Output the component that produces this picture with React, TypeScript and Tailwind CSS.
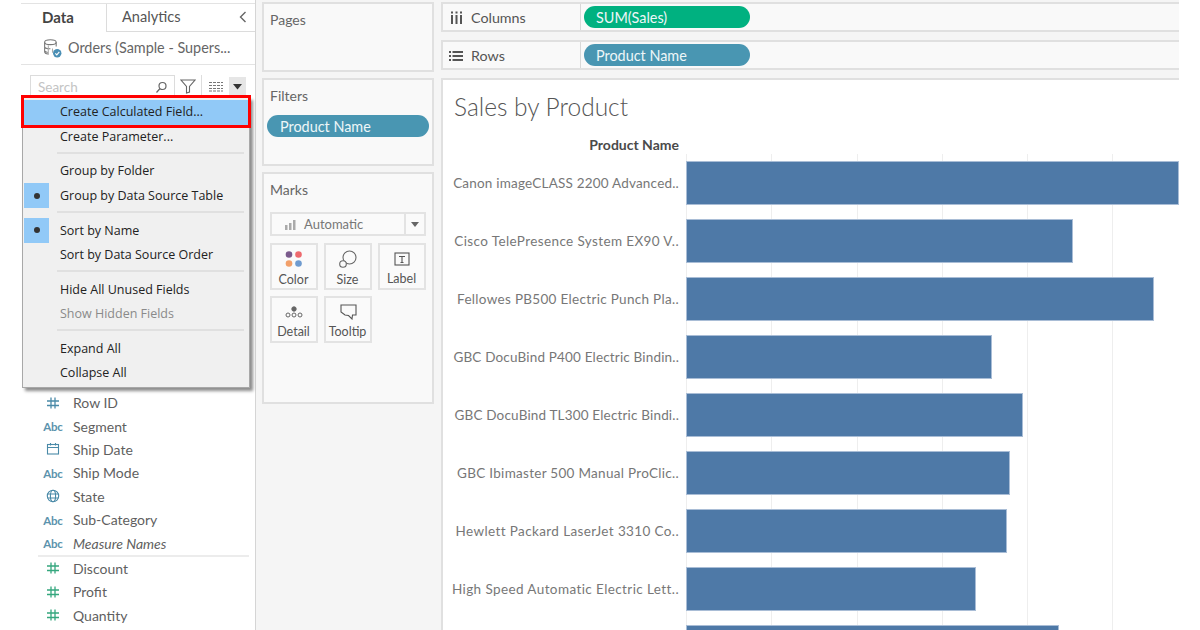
import React from "react";

const bars = [
  ["Canon imageCLASS 2200 Advanced..", 494, "tracking-[0.2px]"],
  ["Cisco TelePresence System EX90 V..", 387, "tracking-[0.38px]"],
  ["Fellowes PB500 Electric Punch Pla..", 468, "tracking-[0.31px]"],
  ["GBC DocuBind P400 Electric Bindin..", 306, "tracking-[0.17px]"],
  ["GBC DocuBind TL300 Electric Bindi..", 337, "tracking-[0.17px]"],
  ["GBC Ibimaster 500 Manual ProClic..", 324, "tracking-[0.29px]"],
  ["Hewlett Packard LaserJet 3310 Co..", 321, "tracking-[0.38px]"],
  ["High Speed Automatic Electric Lett..", 290, "tracking-[0.4px]"],
  ["", 373, ""],
] as const;

const Hash = ({ c }: { c: string }) => (
  <svg width="14" height="14" viewBox="0 0 14 14" fill="none" stroke={c} strokeWidth="1.3">
    <path d="M5 1.500v11M9 1.500v11M1 5h12M1 9.500h12" />
  </svg>
);
const Abc = () => <span className="text-[11.5px] font-bold text-[#5b93ad] tracking-[-0.2px] pt-[2px]">Abc</span>;
const Cal = () => (
  <svg width="14" height="14" viewBox="0 0 14 14" fill="none" stroke="#4a8aa8" strokeWidth="1.1">
    <rect x="1.500" y="2.500" width="11" height="9.500" />
    <path d="M1.500 5.500h11M4.500 1v2.500M9.500 1v2.500" />
  </svg>
);
const Globe = () => (
  <svg width="14" height="14" viewBox="0 0 14 14" fill="none" stroke="#4a8aa8" strokeWidth="1.1">
    <circle cx="7" cy="7" r="5.700" />
    <ellipse cx="7" cy="7" rx="2.600" ry="5.700" />
    <path d="M1.500 5h11M1.500 9h11" />
  </svg>
);

const blue = "#4a8aa8";
const green = "#35a77e";
const fieldsA: [React.ReactNode, string, boolean?][] = [
  [<Hash c={blue} />, "Row ID"],
  [<Abc />, "Segment"],
  [<Cal />, "Ship Date"],
  [<Abc />, "Ship Mode"],
  [<Globe />, "State"],
  [<Abc />, "Sub-Category"],
  [<Abc />, "Measure Names", true],
];
const fieldsB = ["Discount", "Profit", "Quantity"];

function Field({ icon, name, italic }: { icon: React.ReactNode; name: string; italic?: boolean }) {
  return (
    <div className="h-[23.4px] flex items-center">
      <div className="w-[52px] pl-[16px] pr-[4px] flex justify-center">{icon}</div>
      <span className={`text-[14px] text-[#5f5f5f] ${italic ? "italic" : ""}`}>{name}</span>
    </div>
  );
}

function Item({ label, dot, hi, off }: { label: string; dot?: boolean; hi?: boolean; off?: boolean }) {
  return (
    <div className={`h-[24.5px] flex items-center relative ${hi ? "bg-[#91c9f7]" : ""}`}>
      <div className={`w-[25px] ml-[1px] mr-[11px] h-[25px] flex items-center justify-center shrink-0 ${dot ? "bg-[#91c9f7]" : ""}`}>
        {dot && <div className="w-[6px] h-[6px] rounded-full bg-[#333]" />}
      </div>
      <span className={`text-[12.5px] pt-[1px] ${off ? "text-[#8a8a8a]" : "text-[#222]"}`}>{label}</span>
    </div>
  );
}
const Sep = () => (
  <div className="h-[10.1px] pt-[3px] pl-[34px] pr-[5px]">
    <div className="h-[2px] w-full bg-[#e0e0e0]" />
  </div>
);

function Pill({ label, color, w }: { label: string; color: string; w: string }) {
  return (
    <div className={`h-[22px] rounded-full flex items-center pt-[1px] text-[14.400px] text-[#eef6f8] ${color} ${w}`}>
      {label}
    </div>
  );
}

function MarkBtn({ icon, label }: { icon: React.ReactNode; label: string }) {
  return (
    <div className="w-[48px] h-[47px] border-2 border-[#e3e3e3] flex flex-col items-center pt-[5px] bg-[#fafafa]">
      <div className="h-[19px] flex items-center justify-center">{icon}</div>
      <span className="text-[12.5px] leading-[18px] text-[#555] mt-[3px] pr-[1px]">{label}</span>
    </div>
  );
}

function Shelf({ icon, label, children }: { icon: React.ReactNode; label: string; children: React.ReactNode }) {
  return (
    <div className="h-[30px] border-y-2 border-l-2 border-[#e0e0e0] bg-[#f9f9f9] flex items-center">
      <div className="w-[138px] h-full border-r border-[#d8d8d8] flex items-center pl-[6px] pt-[1px] gap-[8px] text-[14.300px] text-[#555]">
        <span className="w-[14px] flex justify-center">{icon}</span>
        {label}
      </div>
      <div className="pl-[3px]">{children}</div>
    </div>
  );
}

export default function App() {
  return (
    <div className="w-[1200px] h-[630px] bg-white overflow-hidden relative" style={{ fontFamily: '"Lato", sans-serif' }}>
      <div className="w-[1179px] h-[630px] flex bg-[#f5f5f5]">
        {/* data pane */}
        <div className="w-[256px] shrink-0 bg-white pl-[21px] pt-[3px] border-r border-[#d5d5d5] flex flex-col">
          <div className="h-[29px] flex border-t border-[#e3e3e3]">
            <div className="w-[86px] border-r border-[#dcdcdc] pl-[21px] pb-[2px] flex items-center text-[15px] font-bold text-[#444]">Data</div>
            <div className="flex-1 border-b border-[#dcdcdc] pl-[15px] pb-[2px] flex items-center justify-between pr-[7px] text-[14.600px] text-[#555]">
              Analytics
              <svg width="10" height="14" viewBox="0 0 10 14" fill="none" stroke="#666" strokeWidth="1.400"><path d="M7.500 2 2.500 7l5 5" /></svg>
            </div>
          </div>
          <div className="h-[33px] border-b border-[#e3e3e3] flex items-center pl-[21px] gap-[5px] text-[14.400px] text-[#666]">
            <svg width="21" height="21" viewBox="0 0 20 20" fill="none" stroke="#777" strokeWidth="1">
              <ellipse cx="8" cy="4" rx="5.500" ry="2.300" />
              <path d="M2.500 4v9c0 1.200 1.600 2 3.500 2.200M13.500 4v4M2.500 8c0 1.200 2.400 2.200 5.500 2.200M2.500 12c0 .8 1 1.500 3 1.800" />
              <path d="M6 7v9M10 10v4" stroke="#aaa" />
              <circle cx="14.500" cy="14.500" r="4" fill="#4a8fb5" stroke="none" />
              <path d="m12.700 14.600 1.400 1.400 2.400-2.800" stroke="#fff" strokeWidth="1.100" />
            </svg>
            <span>Orders (Sample - Supers...</span>
          </div>
          <div className="h-[32px] flex items-end shrink-0">
            <div className="ml-[9px] w-[145px] h-[22px] border border-[#dcdcdc] flex items-center justify-between pl-[7px] pr-[6px] pt-[2px] text-[13.500px] text-[#c4c4c4]">
              Search
              <svg width="13" height="13" viewBox="0 0 13 13" fill="none" stroke="#666" strokeWidth="1.200"><circle cx="7.500" cy="5" r="3.500" /><path d="M5 7.500 1.500 11.500" /></svg>
            </div>
            <div className="ml-[5px] h-[22px] flex items-center">
              <svg width="16" height="16" viewBox="0 0 16 16" fill="none" stroke="#666" strokeWidth="1.100"><path d="M1 2h14L9.500 8.500V14L6.500 15V8.500z" /></svg>
            </div>
            <div className="ml-[5px] w-px h-[22px] bg-[#ddd]" />
            <div className="ml-[7px] h-[22px] flex items-center">
              <svg width="14" height="11" viewBox="0 0 14 11" fill="none" stroke="#777" strokeWidth="1" strokeDasharray="3 1"><path d="M0 1.500h14M0 4.500h14M0 7.500h14M0 10h14" /></svg>
            </div>
            <div className="ml-[6px] w-[17px] h-[20px] bg-[#e6e6e6] flex items-center justify-center">
              <svg width="9" height="6" viewBox="0 0 9 6" fill="#333"><path d="M0 0h9L4.500 5.500z" /></svg>
            </div>
          </div>
          <div className="mt-[294px]">
            {fieldsA.map(([ic, n, it]) => <Field key={n} icon={ic} name={n} italic={it} />)}
            <div className="ml-[17px] mr-[6px] h-[2px] bg-[#ececec]" />
            {fieldsB.map((n) => <Field key={n} icon={<Hash c={green} />} name={n} />)}
          </div>
        </div>

        {/* cards column */}
        <div className="w-[179px] shrink-0 pl-[6px] pr-[1px] pt-[2px] flex flex-col gap-[6px]">
          <div className="h-[70px] border-2 border-[#e0e0e0] bg-[#f9f9f9] pl-[6px] pt-[5px] text-[14px] text-[#666]">Pages</div>
          <div className="h-[88px] border-2 border-[#e0e0e0] bg-[#f9f9f9] pl-[3px] pr-[5px] pt-[7px] text-[14px] text-[#666]">
            <div className="pl-[3px] mb-[10px] leading-[18px]">Filters</div>
            <Pill label="Product Name" color="bg-[#4996b2]" w="w-[162px] pl-[13px]" />
          </div>
          <div className="h-[232px] border-2 border-[#e0e0e0] bg-[#f9f9f9] pl-[6px] pr-[6px] pt-[7px] text-[14px] text-[#666]">
            <div className="leading-[18px]">Marks</div>
            <div className="mt-[13px] h-[24px] border-2 border-[#e3e3e3] flex items-center bg-[#fafafa]">
              <div className="flex-1 flex items-center pl-[12px] pt-[2px] gap-[8px] text-[13px] text-[#777]">
                <svg width="12" height="12" viewBox="0 0 12 12" fill="#aaa"><rect x="1" y="6" width="2.500" height="5" /><rect x="5" y="4" width="2.500" height="7" /><rect x="9" y="1" width="2.500" height="10" /></svg>
                Automatic
              </div>
              <div className="w-[20px] h-full border-l-2 border-[#e3e3e3] flex items-center justify-center">
                <svg width="8" height="5" viewBox="0 0 8 5" fill="#666"><path d="M0 0h8L4 5z" /></svg>
              </div>
            </div>
            <div className="mt-[7px] flex flex-wrap gap-x-[6px] gap-y-[6px] w-[160px]">
              <MarkBtn label="Color" icon={
                <svg width="18" height="18" viewBox="0 0 18 18"><circle cx="4" cy="4.500" r="3.300" fill="#7a5a8c" /><circle cx="13.500" cy="4.500" r="3.300" fill="#ee6a6e" /><circle cx="4" cy="13.500" r="3.300" fill="#f2a06a" /><circle cx="13.500" cy="13.500" r="3.300" fill="#6f9bcf" /></svg>
              } />
              <MarkBtn label="Size" icon={
                <svg width="18" height="18" viewBox="0 0 18 18" fill="none" stroke="#666" strokeWidth="1.100"><circle cx="10.500" cy="7.500" r="6.500" fill="#fafafa" /><circle cx="4" cy="14" r="3.300" fill="#fafafa" /></svg>
              } />
              <MarkBtn label="Label" icon={
                <svg width="16" height="16" viewBox="0 0 16 16" fill="none" stroke="#555" strokeWidth="1.100"><rect x="1" y="2" width="14" height="12" /><path d="M5 5.500h6M8 5.500v6M6.500 11.500h3" /></svg>
              } />
              <MarkBtn label="Detail" icon={
                <svg width="18" height="14" viewBox="0 0 18 14" fill="none" stroke="#666" strokeWidth="1"><circle cx="9" cy="4" r="2.200" fill="#666" /><circle cx="3" cy="10" r="2" /><circle cx="9" cy="10" r="2" /><circle cx="15" cy="10" r="2" /></svg>
              } />
              <MarkBtn label="Tooltip" icon={
                <svg width="17" height="16" viewBox="0 0 17 16" fill="none" stroke="#555" strokeWidth="1.100"><path d="M1 1h15v10h-3.500L12 15 8.500 11.500 5 11 1 8z" /></svg>
              } />
            </div>
          </div>
        </div>

        {/* main */}
        <div className="flex-1 min-w-0 pl-[6px] pt-[2px] flex flex-col">
          <Shelf label="Columns" icon={
            <svg width="13" height="13" viewBox="0 0 13 13" fill="#555"><rect x="1" y="4" width="2" height="9" /><rect x="5.500" y="4" width="2" height="9" /><rect x="10" y="4" width="2" height="9" /><rect x="1" y="0.500" width="2" height="2" /><rect x="5.500" y="0.500" width="2" height="2" /><rect x="10" y="0.500" width="2" height="2" /></svg>
          }>
            <Pill label="SUM(Sales)" color="bg-[#00b180]" w="w-[166px] pl-[12px]" />
          </Shelf>
          <div className="h-[8px]" />
          <Shelf label="Rows" icon={
            <svg width="14" height="12" viewBox="0 0 14 12" fill="#555"><rect x="0" y="1" width="2" height="2" /><rect x="0" y="5" width="2" height="2" /><rect x="0" y="9" width="2" height="2" /><rect x="3.500" y="1" width="10.500" height="2" /><rect x="3.500" y="5" width="10.500" height="2" /><rect x="3.500" y="9" width="10.500" height="2" /></svg>
          }>
            <Pill label="Product Name" color="bg-[#4996b2]" w="w-[166px] pl-[12px]" />
          </Shelf>
          <div className="h-[8px]" />
          <div className="flex-1 min-h-0 border-t-2 border-l-2 border-[#e0e0e0] bg-white overflow-hidden flex flex-col">
            <div className="h-[54px] pl-[11px] pt-[11px] text-[24.5px] font-light leading-[32px] text-[#555] shrink-0">Sales by Product</div>
            <div className="h-[20px] w-[236px] text-right text-[14px] font-bold leading-[22px] text-[#4a4a4a] shrink-0">Product Name</div>
            <div className="flex-1 relative">
              <div className="absolute inset-0 flex">
                {[0, 1, 2, 3, 4, 5].map((i) => (
                  <div key={i} className={`h-full w-[85.3px] shrink-0 ${i === 0 ? "ml-[243px]" : ""} border-l border-[#eeeeee]`} />
                ))}
              </div>
              {bars.map(([name, w, tr], i) => (
                <div key={i} className="h-[58px] flex items-center relative">
                  <div className={`w-[236px] pt-[1px] text-right text-[13.500px] text-[#777] whitespace-nowrap shrink-0 ${tr}`}>{name}</div>
                  <div className="ml-[7px] h-[44px] bg-[#4e79a7] border border-[#a9bdd6]" style={{ width: w }} />
                </div>
              ))}
            </div>
          </div>
        </div>
      </div>

      {/* context menu overlay */}
      <div className="absolute left-[22px] top-[97px] w-[228px] h-[291px] bg-[#f0f0f0] border border-[#a8a8a8] shadow-[3px_3px_3px_rgba(0,0,0,0.45)] pt-[2px]" style={{ fontFamily: '"Open Sans", sans-serif' }}>
        <Item label="Create Calculated Field..." hi />
        <Item label="Create Parameter..." />
        <Sep />
        <Item label="Group by Folder" />
        <Item label="Group by Data Source Table" dot />
        <Sep />
        <Item label="Sort by Name" dot />
        <Item label="Sort by Data Source Order" />
        <Sep />
        <Item label="Hide All Unused Fields" />
        <Item label="Show Hidden Fields" off />
        <Sep />
        <Item label="Expand All" />
        <Item label="Collapse All" />
      </div>
      <div className="absolute left-[21px] top-[95px] w-[230px] h-[33px] border-[3px] border-[#ff0000]" />
    </div>
  );
}
